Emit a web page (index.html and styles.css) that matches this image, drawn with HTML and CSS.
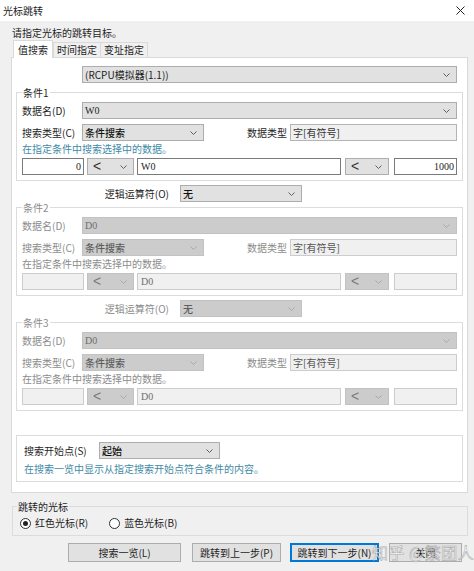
FILE: index.html
```html
<!DOCTYPE html>
<html lang="zh-CN">
<head>
<meta charset="utf-8">
<title>光标跳转</title>
<link rel="stylesheet" href="styles.css">
</head>
<body>
<div class="window">
  <div class="titlebar">
    <span class="title">光标跳转</span>
    <svg class="close" viewBox="0 0 9 9" width="9" height="9"><path d="M0.5 0.5L8.5 8.5M8.5 0.5L0.5 8.5" stroke="#222" stroke-width="1" fill="none"/></svg>
  </div>
  <div class="prompt">请指定光标的跳转目标。</div>
  <div class="tabs">
    <div class="tab active">值搜索</div>
    <div class="tab">时间指定</div>
    <div class="tab second">变址指定</div>
  </div>
  <div class="panel">
    <div class="top-row">
      <div class="combo full"><span>(RCPU模拟器(1.1))</span><svg class="chev" viewBox="0 0 7 4" width="7" height="4"><polyline points="0.5,0.5 3.5,3.5 6.5,0.5"/></svg></div>
    </div>

    <div class="group">
      <span class="legend">条件1</span>
      <div class="row">
        <span class="lbl">数据名(D)</span>
        <div class="combo full"><span class="val">W0</span><svg class="chev" viewBox="0 0 7 4" width="7" height="4"><polyline points="0.5,0.5 3.5,3.5 6.5,0.5"/></svg></div>
      </div>
      <div class="row r2">
        <span class="lbl">搜索类型(C)</span>
        <div class="combo type"><span class="strong">条件搜索</span><svg class="chev" viewBox="0 0 7 4" width="7" height="4"><polyline points="0.5,0.5 3.5,3.5 6.5,0.5"/></svg></div>
        <span class="dt-lbl">数据类型</span>
        <div class="dtbox">字[有符号]</div>
      </div>
      <div class="hint">在指定条件中搜索选择中的数据。</div>
      <div class="row cmp">
        <div class="input num"><span class="val">0</span></div>
        <div class="combo op1"><span class="lt">&lt;</span><svg class="chev" viewBox="0 0 7 4" width="7" height="4"><polyline points="0.5,0.5 3.5,3.5 6.5,0.5"/></svg></div>
        <div class="input mid"><span class="val">W0</span></div>
        <div class="combo op2"><span class="lt">&lt;</span><svg class="chev" viewBox="0 0 7 4" width="7" height="4"><polyline points="0.5,0.5 3.5,3.5 6.5,0.5"/></svg></div>
        <div class="input num2"><span class="val">1000</span></div>
      </div>
    </div>

    <div class="logic">
      <span class="logic-lbl">逻辑运算符(O)</span>
      <div class="combo lcombo"><span class="strong">无</span><svg class="chev" viewBox="0 0 7 4" width="7" height="4"><polyline points="0.5,0.5 3.5,3.5 6.5,0.5"/></svg></div>
    </div>

    <div class="group disabled">
      <span class="legend">条件2</span>
      <div class="row">
        <span class="lbl">数据名(D)</span>
        <div class="combo full"><span class="val">D0</span><svg class="chev" viewBox="0 0 7 4" width="7" height="4"><polyline points="0.5,0.5 3.5,3.5 6.5,0.5"/></svg></div>
      </div>
      <div class="row r2">
        <span class="lbl">搜索类型(C)</span>
        <div class="combo type"><span class="strong">条件搜索</span><svg class="chev" viewBox="0 0 7 4" width="7" height="4"><polyline points="0.5,0.5 3.5,3.5 6.5,0.5"/></svg></div>
        <span class="dt-lbl">数据类型</span>
        <div class="dtbox">字[有符号]</div>
      </div>
      <div class="hint">在指定条件中搜索选择中的数据。</div>
      <div class="row cmp">
        <div class="input num"></div>
        <div class="combo op1"><span class="lt">&lt;</span><svg class="chev" viewBox="0 0 7 4" width="7" height="4"><polyline points="0.5,0.5 3.5,3.5 6.5,0.5"/></svg></div>
        <div class="input mid"><span class="val">D0</span></div>
        <div class="combo op2"><span class="lt">&lt;</span><svg class="chev" viewBox="0 0 7 4" width="7" height="4"><polyline points="0.5,0.5 3.5,3.5 6.5,0.5"/></svg></div>
        <div class="input num2"></div>
      </div>
    </div>

    <div class="logic disabled">
      <span class="logic-lbl">逻辑运算符(O)</span>
      <div class="combo lcombo"><span class="strong">无</span><svg class="chev" viewBox="0 0 7 4" width="7" height="4"><polyline points="0.5,0.5 3.5,3.5 6.5,0.5"/></svg></div>
    </div>

    <div class="group disabled">
      <span class="legend">条件3</span>
      <div class="row">
        <span class="lbl">数据名(D)</span>
        <div class="combo full"><span class="val">D0</span><svg class="chev" viewBox="0 0 7 4" width="7" height="4"><polyline points="0.5,0.5 3.5,3.5 6.5,0.5"/></svg></div>
      </div>
      <div class="row r2">
        <span class="lbl">搜索类型(C)</span>
        <div class="combo type"><span class="strong">条件搜索</span><svg class="chev" viewBox="0 0 7 4" width="7" height="4"><polyline points="0.5,0.5 3.5,3.5 6.5,0.5"/></svg></div>
        <span class="dt-lbl">数据类型</span>
        <div class="dtbox">字[有符号]</div>
      </div>
      <div class="hint">在指定条件中搜索选择中的数据。</div>
      <div class="row cmp">
        <div class="input num"></div>
        <div class="combo op1"><span class="lt">&lt;</span><svg class="chev" viewBox="0 0 7 4" width="7" height="4"><polyline points="0.5,0.5 3.5,3.5 6.5,0.5"/></svg></div>
        <div class="input mid"><span class="val">D0</span></div>
        <div class="combo op2"><span class="lt">&lt;</span><svg class="chev" viewBox="0 0 7 4" width="7" height="4"><polyline points="0.5,0.5 3.5,3.5 6.5,0.5"/></svg></div>
        <div class="input num2"></div>
      </div>
    </div>

    <div class="startbox">
      <div class="row">
        <span class="start-lbl">搜索开始点(S)</span>
        <div class="combo scombo"><span class="strong">起始</span><svg class="chev" viewBox="0 0 7 4" width="7" height="4"><polyline points="0.5,0.5 3.5,3.5 6.5,0.5"/></svg></div>
      </div>
      <div class="hint">在搜索一览中显示从指定搜索开始点符合条件的内容。</div>
    </div>
  </div>

  <div class="cursor-group">
    <span class="legend2">跳转的光标</span>
    <div class="radios">
      <span class="radio"><span class="dot checked"></span>红色光标(R)</span>
      <span class="radio"><span class="dot"></span>蓝色光标(B)</span>
    </div>
  </div>

  <div class="buttons">
    <div class="btn b1">搜索一览(L)</div>
    <div class="btn b2">跳转到上一步(P)</div>
    <div class="btn b3 focus">跳转到下一步(N)</div>
    <div class="btn b4">关闭</div>
  </div>

  <span class="watermark">知乎 @繁团人</span>
</div>
</body>
</html>
```

FILE: styles.css
```css
* { box-sizing: border-box; margin: 0; padding: 0; }
html, body { width: 474px; height: 571px; overflow: hidden; }
body {
  background: #f0f0f0;
  font-family: "Noto Sans CJK SC", "Microsoft YaHei", sans-serif;
  font-size: 10px;
  line-height: 1;
  color: #1e1e1e;
}
.window { position: relative; width: 474px; height: 571px; display: flex; flex-direction: column; }

.titlebar {
  height: 21px; background: #fff;
  display: flex; align-items: center; justify-content: space-between;
  padding: 0 9px 0 3px;
}
.title { color: #222; }
.close { display: block; }

.prompt { height: 14px; margin-top: 5px; margin-left: 12px; display: flex; align-items: center; }

.tabs { display: flex; align-items: flex-end; height: 17px; margin-left: 13px; position: relative; z-index: 1; }
.tab {
  height: 15px; width: 48px;
  border: 1px solid #d9d9d9; border-bottom: none;
  background: #f0f0f0;
  display: flex; align-items: center; justify-content: center;
}
.tab.active { width: 40px; height: 18px; margin-bottom: -1px; background: #fff; }
.tab.second { margin-left: -1px; }

.panel {
  margin-left: 11px; width: 457px;
  background: #fff; border: 1px solid #d9d9d9;
  padding: 8px 4px 10px 4px;
  display: flex; flex-direction: column;
}
.top-row { display: flex; padding-left: 66px; padding-right: 6px; }

.combo {
  height: 17px; background: #e1e1e1; border: 1px solid #adadad;
  display: flex; align-items: center; padding: 0 6px 0 2px;
  color: #1e1e1e; white-space: nowrap;
}
.combo .chev { margin-left: auto; flex: none; }
.chev polyline { fill: none; stroke: #606060; stroke-width: 1; }
.combo.full { flex: 1; }
.val { font-family: "Liberation Serif", "Noto Sans CJK SC", serif; font-size: 10px; }
.strong { color: #111; font-weight: 500; }
.lt { font-family: "Liberation Sans", sans-serif; font-size: 14px; line-height: 1; margin-left: 3px; margin-top: -2px; color: #333; }

.group {
  position: relative; margin-top: 9px;
  border: 1px solid #dcdcdc;
  height: 89px;
  padding: 9px 5px 5px 5px;
  display: flex; flex-direction: column;
}
.legend { position: absolute; top: -7px; left: 5px; background: #fff; padding: 0 1px; line-height: 13px; }
.row { display: flex; align-items: center; height: 17px; }
.r2 { margin-top: 5px; }
.lbl { width: 60px; flex: none; }
.combo.type { width: 122px; flex: none; }
.dt-lbl { flex: 1; text-align: right; padding-right: 3px; }
.dtbox {
  width: 167px; height: 17px; background: #f0f0f0; border: 1px solid #b4b4b4;
  display: flex; align-items: center; padding-left: 2px; color: #333;
}
.hint { height: 16px; display: flex; align-items: center; color: #3f8aa6; }
.cmp { margin-top: 1px; }
.input {
  height: 17px; background: #fff; border: 1px solid #7a7a7a;
  display: flex; align-items: center; padding: 0 2px 0 3px;
}
.input.num { width: 62px; justify-content: flex-end; }
.combo.op1 { width: 47px; margin-left: 3px; }
.input.mid { flex: 1; margin-left: 3px; }
.combo.op2 { width: 44px; margin-left: 4px; }
.input.num2 { width: 63px; margin-left: 5px; justify-content: flex-end; }

.logic { display: flex; align-items: center; height: 17px; margin-top: 4px; }
.group + .logic { margin-top: 4px; }
.logic + .group { margin-top: 5px; }
.logic-lbl { width: 153px; text-align: right; margin-right: 11px; }
.combo.lcombo { width: 122px; }

/* disabled states */
.disabled { color: #8c8c8c; }
.disabled .combo { background: #cccccc; border-color: #c2c2c2; color: #6e6e6e; }
.disabled .combo .strong { color: #5e5e5e; }
.disabled .chev polyline { stroke: #a8a8a8; }
.disabled .lt { color: #7a7a7a; }
.disabled .input { background: #f0f0f0; border-color: #cccccc; color: #6e6e6e; }
.disabled .dtbox { border-color: #cccccc; color: #555; }
.disabled .hint { color: #8c8c8c; }
.disabled .legend { color: #8c8c8c; }

.startbox {
  margin-top: 24px; height: 47px;
  border: 1px solid #dcdcdc;
  padding: 6px 7px 4px 7px;
  display: flex; flex-direction: column;
}
.startbox .hint { margin-top: 2px; }
.start-lbl { width: 75px; flex: none; }
.combo.scombo { width: 121px; }

.cursor-group {
  position: relative;
  margin-top: 13px; margin-left: 12px; width: 456px; height: 30px;
  border: 1px solid #dcdcdc;
  padding: 8px 0 0 7px;
}
.legend2 { position: absolute; top: -7px; left: 4px; background: #f0f0f0; padding: 0 1px; line-height: 13px; }
.radios { display: flex; align-items: center; height: 16px; }
.radio { display: flex; align-items: center; }
.radio + .radio { margin-left: 21px; }
.dot {
  width: 11px; height: 11px; border-radius: 50%;
  border: 1px solid #333; background: #fff; margin-right: 4px;
  display: flex; align-items: center; justify-content: center;
}
.dot.checked::after { content: ""; width: 5px; height: 5px; border-radius: 50%; background: #222; }

.buttons { display: flex; margin-top: 7px; margin-left: 68px; height: 19px; }
.btn {
  height: 19px; background: #e1e1e1; border: 1px solid #adadad;
  display: flex; align-items: center; justify-content: center; color: #1e1e1e;
}
.b1 { width: 113px; }
.b2 { width: 89px; margin-left: 11px; }
.b3 { width: 89px; margin-left: 9px; }
.b4 { width: 73px; margin-left: 10px; }
.btn.focus { border-color: #0078d7; box-shadow: inset 0 0 0 1px #0078d7; }

.watermark {
  position: absolute; left: 372px; top: 543px;
  font-size: 16px; line-height: 18px;
  color: rgba(255, 255, 255, 0.82);
  -webkit-text-stroke: 0.6px rgba(110, 110, 110, 0.55);
  letter-spacing: 0.5px;
  white-space: nowrap;
}
```
